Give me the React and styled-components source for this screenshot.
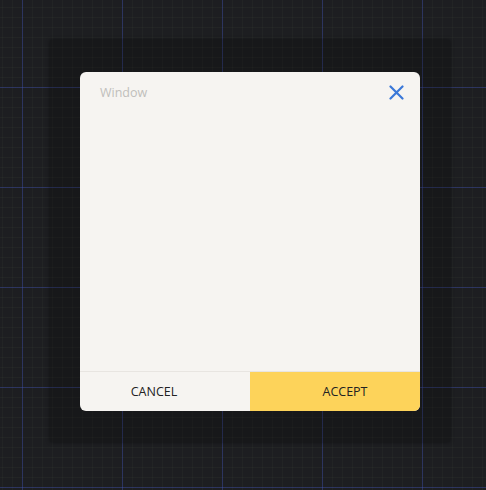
import React from 'react';
import styled, { createGlobalStyle } from 'styled-components';

const GlobalStyle = createGlobalStyle`
  html, body {
    margin: 0;
    padding: 0;
    background: #1d1e21;
  }
  body {
    font-family: "Open Sans", "Noto Sans", sans-serif;
  }
`;

const Canvas = styled.div`
  width: 486px;
  height: 490px;
  box-sizing: border-box;
  padding: 40px 0 0 50px;
  overflow: hidden;
  background-color: #1d1e21;
  background-image:
    linear-gradient(to right, rgba(62, 80, 190, 0.38) 1px, transparent 1px),
    linear-gradient(to bottom, rgba(62, 80, 190, 0.38) 1px, transparent 1px),
    linear-gradient(to right, rgba(100, 120, 80, 0.07) 1px, transparent 1px),
    linear-gradient(to bottom, rgba(100, 120, 80, 0.07) 1px, transparent 1px);
  background-size: 100px 100px, 100px 100px, 10px 10px, 10px 10px;
  background-position: 22px 0, 0 87px, 2px 0, 0 7px;
`;

const Backdrop = styled.div`
  width: 340px;
  padding: 32px 30px 31px;
  background: rgba(0, 0, 0, 0.2);
  box-shadow: 0 0 4px rgba(0, 0, 0, 0.45);
`;

const Dialog = styled.div`
  width: 340px;
  height: 339px;
  display: flex;
  flex-direction: column;
  background: #f6f4f1;
  border-radius: 6px;
  overflow: hidden;
`;

const Header = styled.div`
  display: flex;
  align-items: center;
  justify-content: space-between;
  padding: 11px 15px 0 20px;
`;

const Title = styled.span`
  font-size: 12.5px;
  color: #c0bebb;
`;

const CloseButton = styled.button`
  border: none;
  background: none;
  padding: 0;
  width: 18px;
  height: 18px;
  display: flex;
  align-items: center;
  justify-content: center;
  cursor: pointer;
`;

const Body = styled.div`
  flex: 1;
`;

const Footer = styled.div`
  display: grid;
  grid-template-columns: 1fr 1fr;
  height: 39px;
  border-top: 1px solid #e8e5e1;
`;

const ActionButton = styled.button`
  border: none;
  margin: 0;
  padding: ${p => (p.$primary ? '0 0 0 20px' : '0 22px 0 0')};
  font-family: "Open Sans", "Noto Sans", sans-serif;
  font-size: 12.5px;
  color: #222;
  background: ${p => (p.$primary ? '#fdd35a' : 'transparent')};
  cursor: pointer;
`;

export default function App() {
  return (
    <>
      <GlobalStyle />
      <Canvas>
        <Backdrop>
          <Dialog>
            <Header>
              <Title>Window</Title>
              <CloseButton aria-label="Close">
                <svg width="15" height="15" viewBox="0 0 15 15">
                  <path d="M1.5 1.5 L13.5 13.5 M13.5 1.5 L1.5 13.5" stroke="#3b78d8" strokeWidth="2.2" strokeLinecap="round" />
                </svg>
              </CloseButton>
            </Header>
            <Body />
            <Footer>
              <ActionButton>CANCEL</ActionButton>
              <ActionButton $primary>ACCEPT</ActionButton>
            </Footer>
          </Dialog>
        </Backdrop>
      </Canvas>
    </>
  );
}
